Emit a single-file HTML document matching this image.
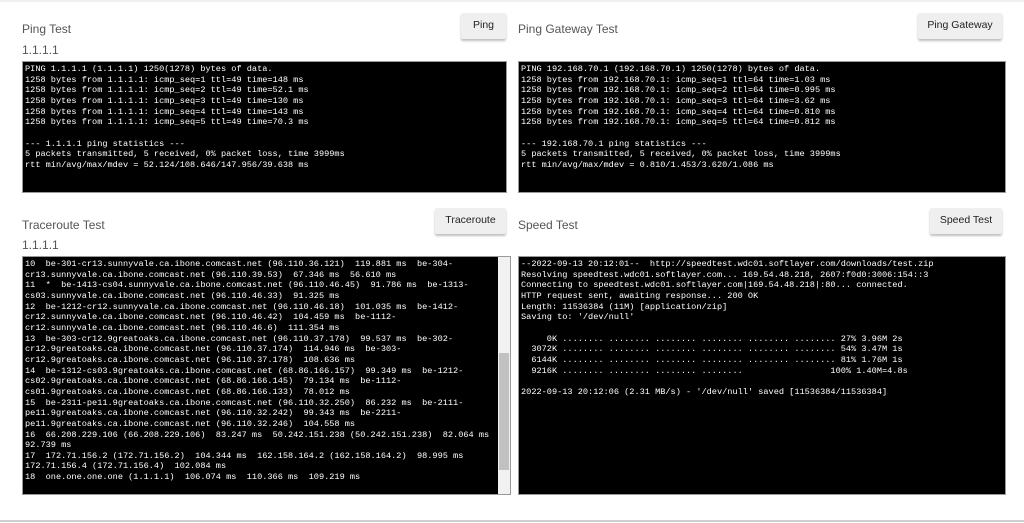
<!DOCTYPE html>
<html><head><meta charset="utf-8"><style>
html,body{margin:0;padding:0;background:#fff;width:1024px;height:523px;overflow:hidden;font-family:"Liberation Sans",sans-serif;}
.topline{position:absolute;left:0;top:0;width:1024px;height:2px;background:#f0f0f0;}
.botline{position:absolute;left:0;top:520px;width:1024px;height:2px;background:#cfcfcf;}
.t{position:absolute;font-size:12px;color:#555;}
.l{position:absolute;font-size:12px;color:#555;}
.btn{position:absolute;height:26px;background:#efefef;border-radius:2px;box-shadow:0 2px 2px rgba(0,0,0,.25);font-size:10.5px;color:#222;text-align:center;line-height:24px;}
.box{position:absolute;background:#000;border:1px solid #999;box-sizing:border-box;color:#fff;font-family:"Liberation Mono",monospace;font-size:8.6px;line-height:10.65px;white-space:pre;padding:2px 0 0 2px;overflow:hidden;}
.sb{position:absolute;background:#f1f1f1;}
.thumb{position:absolute;background:#c1c1c1;}
</style></head><body>
<div class="topline"></div>
<div class="t" style="left:22px;top:22px">Ping Test</div>
<div class="btn" style="left:461px;top:13px;width:45px">Ping</div>
<div class="l" style="left:22px;top:43px">1.1.1.1</div>
<div class="box" style="left:22px;top:61px;width:485px;height:132px">PING 1.1.1.1 (1.1.1.1) 1250(1278) bytes of data.
1258 bytes from 1.1.1.1: icmp_seq=1 ttl=49 time=148 ms
1258 bytes from 1.1.1.1: icmp_seq=2 ttl=49 time=52.1 ms
1258 bytes from 1.1.1.1: icmp_seq=3 ttl=49 time=130 ms
1258 bytes from 1.1.1.1: icmp_seq=4 ttl=49 time=143 ms
1258 bytes from 1.1.1.1: icmp_seq=5 ttl=49 time=70.3 ms

--- 1.1.1.1 ping statistics ---
5 packets transmitted, 5 received, 0% packet loss, time 3999ms
rtt min/avg/max/mdev = 52.124/108.646/147.956/39.638 ms</div>

<div class="t" style="left:518px;top:22px">Ping Gateway Test</div>
<div class="btn" style="left:918px;top:13px;width:84px">Ping Gateway</div>
<div class="box" style="left:518px;top:61px;width:488px;height:132px">PING 192.168.70.1 (192.168.70.1) 1250(1278) bytes of data.
1258 bytes from 192.168.70.1: icmp_seq=1 ttl=64 time=1.03 ms
1258 bytes from 192.168.70.1: icmp_seq=2 ttl=64 time=0.995 ms
1258 bytes from 192.168.70.1: icmp_seq=3 ttl=64 time=3.62 ms
1258 bytes from 192.168.70.1: icmp_seq=4 ttl=64 time=0.810 ms
1258 bytes from 192.168.70.1: icmp_seq=5 ttl=64 time=0.812 ms

--- 192.168.70.1 ping statistics ---
5 packets transmitted, 5 received, 0% packet loss, time 3999ms
rtt min/avg/max/mdev = 0.810/1.453/3.620/1.086 ms</div>

<div class="t" style="left:22px;top:218px">Traceroute Test</div>
<div class="btn" style="left:435px;top:208px;width:71px">Traceroute</div>
<div class="l" style="left:22px;top:238px">1.1.1.1</div>
<div class="box" style="left:22px;top:256px;width:489px;height:239px;padding-top:2px">10  be-301-cr13.sunnyvale.ca.ibone.comcast.net (96.110.36.121)  119.881 ms  be-304-
cr13.sunnyvale.ca.ibone.comcast.net (96.110.39.53)  67.346 ms  56.610 ms
11  *  be-1413-cs04.sunnyvale.ca.ibone.comcast.net (96.110.46.45)  91.786 ms  be-1313-
cs03.sunnyvale.ca.ibone.comcast.net (96.110.46.33)  91.325 ms
12  be-1212-cr12.sunnyvale.ca.ibone.comcast.net (96.110.46.18)  101.035 ms  be-1412-
cr12.sunnyvale.ca.ibone.comcast.net (96.110.46.42)  104.459 ms  be-1112-
cr12.sunnyvale.ca.ibone.comcast.net (96.110.46.6)  111.354 ms
13  be-303-cr12.9greatoaks.ca.ibone.comcast.net (96.110.37.178)  99.537 ms  be-302-
cr12.9greatoaks.ca.ibone.comcast.net (96.110.37.174)  114.946 ms  be-303-
cr12.9greatoaks.ca.ibone.comcast.net (96.110.37.178)  108.636 ms
14  be-1312-cs03.9greatoaks.ca.ibone.comcast.net (68.86.166.157)  99.349 ms  be-1212-
cs02.9greatoaks.ca.ibone.comcast.net (68.86.166.145)  79.134 ms  be-1112-
cs01.9greatoaks.ca.ibone.comcast.net (68.86.166.133)  78.012 ms
15  be-2311-pe11.9greatoaks.ca.ibone.comcast.net (96.110.32.250)  86.232 ms  be-2111-
pe11.9greatoaks.ca.ibone.comcast.net (96.110.32.242)  99.343 ms  be-2211-
pe11.9greatoaks.ca.ibone.comcast.net (96.110.32.246)  104.558 ms
16  66.208.229.106 (66.208.229.106)  83.247 ms  50.242.151.238 (50.242.151.238)  82.064 ms
92.739 ms
17  172.71.156.2 (172.71.156.2)  104.344 ms  162.158.164.2 (162.158.164.2)  98.995 ms
172.71.156.4 (172.71.156.4)  102.084 ms
18  one.one.one.one (1.1.1.1)  106.074 ms  110.366 ms  109.219 ms</div>
<div class="sb" style="left:498px;top:257px;width:12px;height:237px"></div>
<div class="thumb" style="left:499px;top:353px;width:10px;height:117px"></div>

<div class="t" style="left:518px;top:218px">Speed Test</div>
<div class="btn" style="left:930px;top:208px;width:72px">Speed Test</div>
<div class="box" style="left:518px;top:256px;width:488px;height:239px">--2022-09-13 20:12:01--  http://speedtest.wdc01.softlayer.com/downloads/test.zip
Resolving speedtest.wdc01.softlayer.com... 169.54.48.218, 2607:f0d0:3006:154::3
Connecting to speedtest.wdc01.softlayer.com|169.54.48.218|:80... connected.
HTTP request sent, awaiting response... 200 OK
Length: 11536384 (11M) [application/zip]
Saving to: '/dev/null'

     0K ........ ........ ........ ........ ........ ........ 27% 3.96M 2s
  3072K ........ ........ ........ ........ ........ ........ 54% 3.47M 1s
  6144K ........ ........ ........ ........ ........ ........ 81% 1.76M 1s
  9216K ........ ........ ........ ........                 100% 1.40M=4.8s

2022-09-13 20:12:06 (2.31 MB/s) - '/dev/null' saved [11536384/11536384]</div>
<div class="botline"></div>
</body></html>
